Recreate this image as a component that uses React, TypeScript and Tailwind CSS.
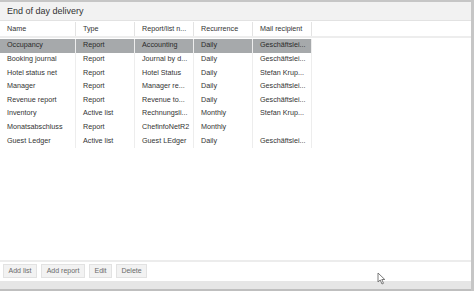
import React from 'react'

type Row = {
  name: string
  type: string
  report: string
  recurrence: string
  mail: string
  selected?: boolean
}

const rows: Row[] = [
  { name: 'Occupancy', type: 'Report', report: 'Accounting', recurrence: 'Daily', mail: 'Geschäftslei...', selected: true },
  { name: 'Booking journal', type: 'Report', report: 'Journal by d...', recurrence: 'Daily', mail: 'Geschäftslei...' },
  { name: 'Hotel status net', type: 'Report', report: 'Hotel Status', recurrence: 'Daily', mail: 'Stefan Krup...' },
  { name: 'Manager', type: 'Report', report: 'Manager re...', recurrence: 'Daily', mail: 'Geschäftslei...' },
  { name: 'Revenue report', type: 'Report', report: 'Revenue to...', recurrence: 'Daily', mail: 'Geschäftslei...' },
  { name: 'Inventory', type: 'Active list', report: 'Rechnungsli...', recurrence: 'Monthly', mail: 'Stefan Krup...' },
  { name: 'Monatsabschluss', type: 'Report', report: 'ChefinfoNetR2', recurrence: 'Monthly', mail: '' },
  { name: 'Guest Ledger', type: 'Active list', report: 'Guest LEdger', recurrence: 'Daily', mail: 'Geschäftslei...' },
]

const widths = ['w-[76px]', 'w-[59px]', 'w-[59px]', 'w-[59px]', 'w-[59px]']
const headers = ['Name', 'Type', 'Report/list n...', 'Recurrence', 'Mail recipient']

const Cell: React.FC<{ w: string; children: React.ReactNode; header?: boolean }> = ({ w, children, header }) => (
  <div
    className={`${w} shrink-0 h-full flex items-center pl-[7px] whitespace-nowrap overflow-hidden border-r ${
      header ? 'border-[#e3e3e3]' : 'border-[#ededed]'
    }`}
  >
    {children}
  </div>
)

const FooterButton: React.FC<{ label: string; w: string }> = ({ label, w }) => (
  <button className={`${w} h-[14px] bg-[#f2f2f2] border border-[#e2e2e2] text-[7px] text-[#6a6a6a] flex items-center justify-center`}>
    {label}
  </button>
)

export default function App() {
  return (
    <div
      className="w-[474px] h-[291px] relative overflow-hidden bg-white flex flex-col border-t-2 border-r-[3px] border-[#c6c6c6] text-[#333]"
      style={{ fontFamily: '"Liberation Sans", Arial, sans-serif' }}
    >
      {/* Title */}
      <div className="h-[19px] shrink-0 bg-[#f2f2f2] border-b border-[#e2e2e2] flex items-center pl-[7px] pt-px text-[9px] text-[#333]">
        End of day delivery
      </div>

      {/* Header */}
      <div className="h-[17px] shrink-0 flex border-b-2 border-[#ededed] text-[7.2px] pt-px">
        {headers.map((h, i) => (
          <Cell key={h} w={widths[i]} header>
            {h}
          </Cell>
        ))}
      </div>

      {/* Rows */}
      <div className="flex-1 flex flex-col pt-px">
        {rows.map((r) => (
          <div key={r.name} className="h-[13.6px] flex text-[7.2px]">
            <div className={`flex h-full ${r.selected ? 'bg-[#a6a9ab] text-[#2a2a2a]' : ''}`}>
              <Cell w={widths[0]}>{r.name}</Cell>
              <Cell w={widths[1]}>{r.type}</Cell>
              <Cell w={widths[2]}>{r.report}</Cell>
              <Cell w={widths[3]}>{r.recurrence}</Cell>
              <Cell w={widths[4]}>{r.mail}</Cell>
            </div>
          </div>
        ))}
      </div>

      {/* Buttons */}
      <div className="h-[21px] shrink-0 border-t-2 border-[#ececec] flex items-center gap-[4px] pl-[3px] pb-px">
        <FooterButton label="Add list" w="w-[34px]" />
        <FooterButton label="Add report" w="w-[44px]" />
        <FooterButton label="Edit" w="w-[23px]" />
        <FooterButton label="Delete" w="w-[31px]" />
      </div>

      {/* Bottom strip */}
      <div className="h-[10px] shrink-0 bg-[#e6e6e6] border-b-2 border-[#bfbfbf]" />

      {/* Mouse cursor */}
      <svg className="absolute left-[377px] top-[270px]" width="9" height="13" viewBox="0 0 9 13">
        <path d="M1 1 L1 10 L3.2 8 L5 12 L6.5 11.3 L4.8 7.5 L7.8 7.5 Z" fill="#fff" stroke="#6b6b6b" strokeWidth="0.9" strokeLinejoin="round" />
      </svg>
    </div>
  )
}
